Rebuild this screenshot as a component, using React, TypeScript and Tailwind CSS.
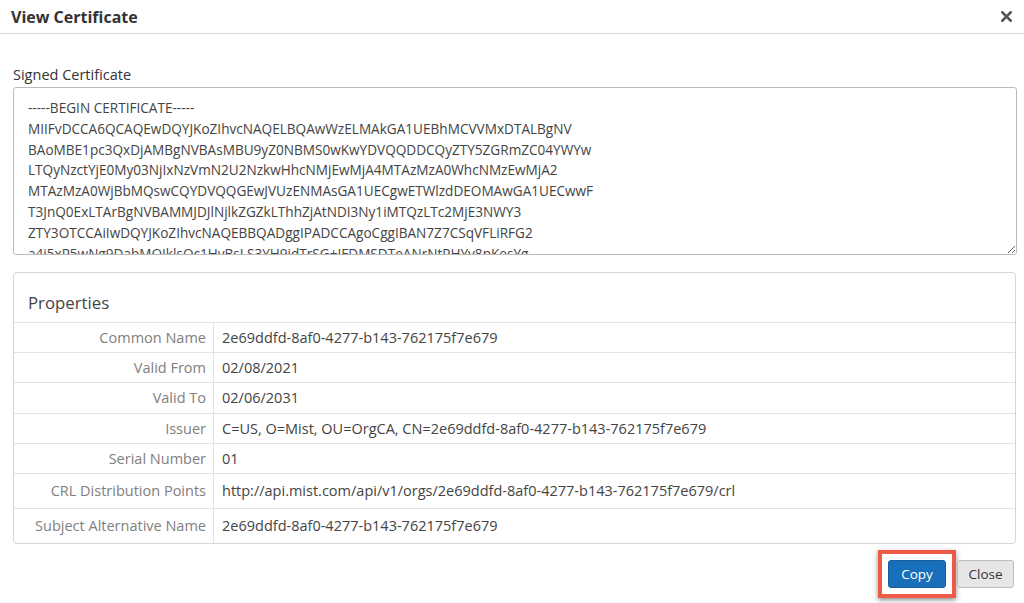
import { X } from 'lucide-react';

const certificate = `-----BEGIN CERTIFICATE-----
MIIFvDCCA6QCAQEwDQYJKoZIhvcNAQELBQAwWzELMAkGA1UEBhMCVVMxDTALBgNV
BAoMBE1pc3QxDjAMBgNVBAsMBU9yZ0NBMS0wKwYDVQQDDCQyZTY5ZGRmZC04YWYw
LTQyNzctYjE0My03NjIxNzVmN2U2NzkwHhcNMjEwMjA4MTAzMzA0WhcNMzEwMjA2
MTAzMzA0WjBbMQswCQYDVQQGEwJVUzENMAsGA1UECgwETWlzdDEOMAwGA1UECwwF
T3JnQ0ExLTArBgNVBAMMJDJlNjlkZGZkLThhZjAtNDI3Ny1iMTQzLTc2MjE3NWY3
ZTY3OTCCAiIwDQYJKoZIhvcNAQEBBQADggIPADCCAgoCggIBAN7Z7CSqVFLiRFG2
a4j5xP5wNg9DabMOIklsOc1HyBsLS3YH9idTrSG+IFDMSDTeANrNtPHYv8pKesYg
k2Lw0pQbX7nJvT4mR1sY8cUe6fHdZ3aN9oPq2tWxV5iKcB7gE1lMzD0uS4rF3hAy
-----END CERTIFICATE-----`;

const uuid = '2e69ddfd-8af0-4277-b143-762175f7e679';

const properties = [
    { label: 'Common Name', value: uuid, h: 'h-[30px]' },
    { label: 'Valid From', value: '02/08/2021', h: 'h-[30px]' },
    { label: 'Valid To', value: '02/06/2031', h: 'h-[31px]' },
    { label: 'Issuer', value: `C=US, O=Mist, OU=OrgCA, CN=${uuid}`, h: 'h-[30px]' },
    { label: 'Serial Number', value: '01', h: 'h-[30px]' },
    { label: 'CRL Distribution Points', value: `http://api.mist.com/api/v1/orgs/${uuid}/crl`, h: 'h-[35px]' },
    { label: 'Subject Alternative Name', value: uuid, h: 'h-[34px]' },
];

export default function App() {
    return (
        <div
            className="w-[1024px] h-[603px] bg-white text-[#444] flex flex-col overflow-hidden"
            style={{ fontFamily: '"Open Sans", "Noto Sans", sans-serif' }}
        >
            {/* header */}
            <div className="flex items-center justify-between h-[34px] pl-[11px] pr-[9px] border-b border-[#d4d4d4] shrink-0">
                <div className="text-[16px] font-bold text-[#333]">View Certificate</div>
                <X size={17} strokeWidth={3.5} className="text-[#555]" />
            </div>

            {/* body */}
            <div className="flex flex-col px-[13px] pt-[30px] grow">
                <label className="text-[14.5px] text-[#333] leading-[21px] mb-[2px]">Signed Certificate</label>
                <textarea
                    readOnly
                    defaultValue={certificate}
                    className="w-[1004px] h-[168px] border border-[#bbb] rounded-[3px] pl-[14px] pr-3 pt-[10px] text-[13.6px] leading-[20.8px] text-[#444] overflow-hidden whitespace-pre outline-none"
                    style={{ fontFamily: '"Open Sans", "Noto Sans", sans-serif' }}
                />

                <div className="mt-[17px] w-[1003px] border border-[#d6d6d6] rounded-[4px] flex flex-col">
                    <div className="h-[50px] flex items-end pb-[7px] pl-[14px] text-[16.8px] text-[#444] border-b border-[#e2e2e2]">
                        Properties
                    </div>
                    {properties.map((p, i) => (
                        <div
                            key={p.label}
                            className={`flex ${p.h} ${i < properties.length - 1 ? 'border-b border-[#e2e2e2]' : ''}`}
                        >
                            <div className="w-[200px] shrink-0 flex items-center justify-end pr-[7px] text-[14.5px] text-[#808080] border-r border-[#e2e2e2]">
                                {p.label}
                            </div>
                            <div className="flex items-center pl-[8px] text-[14.5px] text-[#444]">{p.value}</div>
                        </div>
                    ))}
                </div>
            </div>

            {/* footer */}
            <div className="flex justify-end items-center pr-[10px] pb-[5px] shrink-0">
                <div className="border-[4px] border-[#ef5a48] p-[6px] shadow-[0_2px_5px_rgba(0,0,0,0.45)] mr-[1px]">
                    <button className="w-[58px] h-[28px] rounded-[3px] bg-[#1a6fba] text-white text-[13.5px] border border-[#155f9f]">
                        Copy
                    </button>
                </div>
                <button className="w-[57px] h-[28px] rounded-[3px] bg-[#e6e6e6] text-[#333] text-[13.5px] border border-[#bdbdbd]">
                    Close
                </button>
            </div>
        </div>
    );
}
